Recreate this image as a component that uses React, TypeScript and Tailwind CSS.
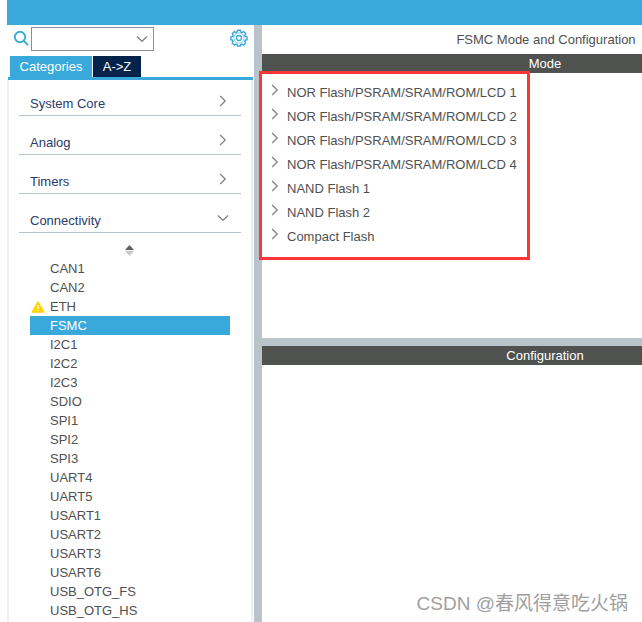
import { useState } from 'react';

interface ChevronProps {
  open?: boolean;
}

const categories = ['System Core', 'Analog', 'Timers', 'Connectivity'];

const peripherals = [
  { name: 'CAN1' },
  { name: 'CAN2' },
  { name: 'ETH', warning: true },
  { name: 'FSMC' },
  { name: 'I2C1' },
  { name: 'I2C2' },
  { name: 'I2C3' },
  { name: 'SDIO' },
  { name: 'SPI1' },
  { name: 'SPI2' },
  { name: 'SPI3' },
  { name: 'UART4' },
  { name: 'UART5' },
  { name: 'USART1' },
  { name: 'USART2' },
  { name: 'USART3' },
  { name: 'USART6' },
  { name: 'USB_OTG_FS' },
  { name: 'USB_OTG_HS' },
];

const modes = [
  'NOR Flash/PSRAM/SRAM/ROM/LCD 1',
  'NOR Flash/PSRAM/SRAM/ROM/LCD 2',
  'NOR Flash/PSRAM/SRAM/ROM/LCD 3',
  'NOR Flash/PSRAM/SRAM/ROM/LCD 4',
  'NAND Flash 1',
  'NAND Flash 2',
  'Compact Flash',
];

const Chevron: React.FC<ChevronProps> = ({ open }) => (
  <svg width="12" height="12" viewBox="0 0 12 12" fill="none" stroke="#858585" strokeWidth="1.3" className="shrink-0">
    <path d={open ? 'M1 3.5 6 8.3 11 3.5' : 'M3.2 1 8.2 6 3.2 11'} />
  </svg>
);

const SearchIcon = () => (
  <svg width="16" height="16" viewBox="0 0 16 16" fill="none" stroke="#39a9dc" strokeWidth="1.9" className="shrink-0">
    <circle cx="7" cy="7" r="5.2" />
    <path d="M10.8 10.8 15 15" />
  </svg>
);

const GearIcon = () => (
  <svg width="18" height="18" viewBox="0 0 18 18" fill="none" stroke="#39a9dc" strokeLinejoin="round">
    <path
      d="M7.4 1.2h3.2l.5 2 1.1.5 1.8-1.1 2.2 2.3-1 1.8.4 1.1 2 .5v3l-2 .5-.5 1.1 1.1 1.8-2.3 2.3-1.8-1.1-1.1.5-.4 1.6H7.4l-.5-1.7-1.1-.4L4 17l-2.2-2.3 1-1.8-.4-1.1-2-.5v-3l2-.5.5-1.1-1.1-1.8L4 2.6l1.8 1.1 1.1-.5z"
      strokeWidth="1.5"
      transform="translate(.5 .1) scale(.94)"
    />
    <circle cx="9" cy="9" r="5.2" strokeWidth="1" strokeOpacity="0.6" />
    <circle cx="9" cy="9" r="2.5" strokeWidth="1.3" />
  </svg>
);

const WarningIcon = () => (
  <svg width="14" height="12" viewBox="0 0 14 12" className="shrink-0">
    <path d="M7 1.2 12.8 11H1.2z" fill="#ffd200" stroke="#ffd200" strokeWidth="1.4" strokeLinejoin="round" />
    <path d="M7 4v4M7 9v1.2" stroke="#fff" strokeWidth="1.2" />
  </svg>
);

const Sidebar = () => {
  const [selected, setSelected] = useState('FSMC');

  return (
    <aside className="flex w-[247px] shrink-0 flex-col">
      <div className="flex h-[31px] items-start justify-between pt-[2px] pr-[6px] pl-[6px]">
        <div className="flex items-start gap-[2px]">
          <label htmlFor="search" aria-label="Search" className="pt-[3px]">
            <SearchIcon />
          </label>
          <div className="flex h-6 w-[123px] items-center border border-[#8a9096] pr-[5px]">
            <input id="search" type="text" className="h-full min-w-0 flex-1 px-1 outline-none" />
            <button type="button" aria-label="Show searches">
              <Chevron open />
            </button>
          </div>
        </div>
        <button type="button" aria-label="Settings" className="pt-[2px]">
          <GearIcon />
        </button>
      </div>

      <div className="mr-px ml-px flex gap-px border-b-[3px] border-[#39a9dc] pl-[2px] leading-[21px] text-white">
        <button type="button" className="w-[82px] bg-[#39a9dc]">Categories</button>
        <button type="button" className="w-12 bg-[#03234b]">A-&gt;Z</button>
      </div>

      <div className="mr-px flex-1 border-x-2 border-[#f0f0f0]">
        <div className="mx-[10px] flex flex-col gap-[3px]">
          {categories.map((category) => (
            <button
              key={category}
              type="button"
              className="flex h-9 items-center justify-between border-b border-[#b9c4ca] pt-[6px] pr-[12px] pl-[11px] text-left text-[#2b3a6b]"
            >
              <span className="pt-[5px]">{category}</span>
              <Chevron open={category === 'Connectivity'} />
            </button>
          ))}
        </div>

        <div className="flex h-[26px] items-end justify-center pr-[2px] pb-[3px]">
          <svg width="9" height="11" viewBox="0 0 9 11">
            <path d="M0 5 4.5 0 9 5z" fill="#606060" />
            <path d="M0 6h9L4.5 11z" fill="#c8c8c8" />
          </svg>
        </div>

        <ul className="mr-[21px] ml-[21px]">
          {peripherals.map(({ name, warning }) => (
            <li key={name}>
              <button
                type="button"
                onClick={() => setSelected(name)}
                className={`flex h-[19px] w-full items-center text-left ${
                  name === selected ? 'bg-[#39a9dc] text-white' : 'text-[#505050]'
                }`}
              >
                <span className="flex w-5 shrink-0 pl-px">{warning && <WarningIcon />}</span>
                {name}
              </button>
            </li>
          ))}
        </ul>
      </div>
    </aside>
  );
};

const SectionBar: React.FC<{ title: string }> = ({ title }) => (
  <h2 className="bg-[#505250] pl-[186px] text-center leading-[19px] text-white">{title}</h2>
);

export default function App() {
  return (
    <div className="relative flex min-h-screen flex-col bg-white pl-[7px] font-['Liberation_Sans',Arial,sans-serif] text-[13px] leading-[19px]">
      <header className="h-[25px] bg-[#39a9dc]" />
      <div className="flex flex-1">
        <Sidebar />
        <div className="w-2 shrink-0 bg-[#b9c4ca]" />

        <main className="min-w-0 flex-1">
          <h1 className="pl-[188px] text-center leading-[29px] whitespace-nowrap text-[#505050]">
            FSMC Mode and Configuration
          </h1>
          <SectionBar title="Mode" />
          <section className="relative h-[265px] pt-2">
            <ul className="pl-[7px]">
              {modes.map((mode) => (
                <li key={mode}>
                  <button type="button" className="flex h-6 items-start gap-[6px] text-left text-[#505050]">
                    <span className="pt-[3px]">
                      <Chevron />
                    </span>
                    <span className="leading-6">{mode}</span>
                  </button>
                </li>
              ))}
            </ul>
            {/* highlight around the mode list */}
            <div className="pointer-events-none absolute -top-[2px] -left-[3px] h-[189px] w-[271px] border-[3px] border-[#fa3636]" />
          </section>
          <div className="h-2 bg-[#b9c4ca]" />
          <SectionBar title="Configuration" />
        </main>
      </div>

      <p className="absolute right-[14px] bottom-[4px] font-['Liberation_Sans','Noto_Sans_CJK_SC',sans-serif] text-[19px] leading-7 text-[#a0a0a0]">
        CSDN @春风得意吃火锅
      </p>
    </div>
  );
}
